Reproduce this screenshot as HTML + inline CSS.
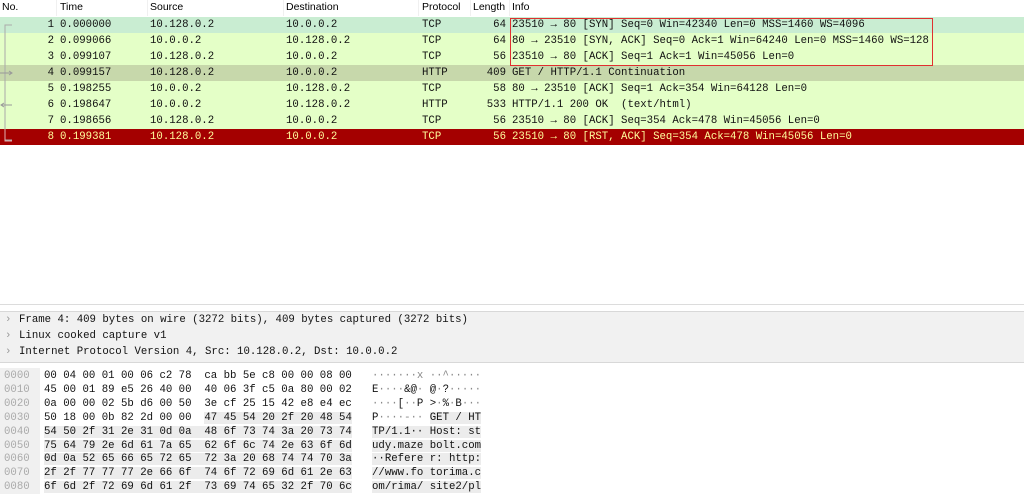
<!DOCTYPE html>
<html><head><meta charset="utf-8"><style>
*{margin:0;padding:0;box-sizing:border-box}
body{width:1024px;height:494px;overflow:hidden;background:#fff;position:relative;font-family:"Liberation Mono",monospace;font-size:10.7px;color:#111}
.hdr{position:absolute;left:0;top:0;width:1024px;height:16px;font-family:"Liberation Sans",sans-serif;font-size:10.5px;line-height:14px;color:#000}
.hdr span{position:absolute;top:0}
.hdr i{position:absolute;top:0;width:1px;height:16px;background:#f0f0f0}
.row{position:absolute;left:0;width:1024px;height:16px;line-height:16px;white-space:pre}
.row span{position:absolute;top:0}
.n{right:auto;width:54px;text-align:right;left:0}
.len{width:506px;text-align:right;left:0}
.det{position:absolute;left:0;top:311px;width:1024px;height:52px;background:#f1f1f1;border-top:1px solid #d8d8d8;border-bottom:1px solid #d8d8d8}
.det div{height:16px;line-height:16px;white-space:pre;padding-left:19px;position:relative}
.det div b{position:absolute;left:5px;color:#999;font-weight:normal}
.hex{position:absolute;left:0;top:368px;width:1024px;height:126px;background:#fff}
.off{position:absolute;left:0;top:0;width:40px;height:126px;background:#f0f0f0}
.hr{position:absolute;left:0;height:14px;line-height:14px;white-space:pre}
.g{background:#ececec}
</style></head><body>
<div class="hdr">
<span style="left:2px">No.</span><span style="left:60px">Time</span><span style="left:150px">Source</span><span style="left:286px">Destination</span><span style="left:422px">Protocol</span><span style="left:473px">Length</span><span style="left:512px">Info</span>
<i style="left:56px"></i><i style="left:147px"></i><i style="left:283px"></i><i style="left:418px"></i><i style="left:470px"></i><i style="left:509px"></i>
</div>

<div class="row" style="top:17px;background:#c9edd2"><span class="n">1</span><span style="left:60px">0.000000</span><span style="left:150px">10.128.0.2</span><span style="left:286px">10.0.0.2</span><span style="left:422px">TCP</span><span class="len">64</span><span style="left:512px">23510 → 80 [SYN] Seq=0 Win=42340 Len=0 MSS=1460 WS=4096</span></div>
<div class="row" style="top:33px;background:#e4ffc7"><span class="n">2</span><span style="left:60px">0.099066</span><span style="left:150px">10.0.0.2</span><span style="left:286px">10.128.0.2</span><span style="left:422px">TCP</span><span class="len">64</span><span style="left:512px">80 → 23510 [SYN, ACK] Seq=0 Ack=1 Win=64240 Len=0 MSS=1460 WS=128</span></div>
<div class="row" style="top:49px;background:#e4ffc7;height:16px"><span class="n">3</span><span style="left:60px">0.099107</span><span style="left:150px">10.128.0.2</span><span style="left:286px">10.0.0.2</span><span style="left:422px">TCP</span><span class="len">56</span><span style="left:512px">23510 → 80 [ACK] Seq=1 Ack=1 Win=45056 Len=0</span></div>
<div class="row" style="top:65px;background:#c7d8ab"><span class="n">4</span><span style="left:60px">0.099157</span><span style="left:150px">10.128.0.2</span><span style="left:286px">10.0.0.2</span><span style="left:422px">HTTP</span><span class="len">409</span><span style="left:512px">GET / HTTP/1.1 Continuation</span></div>
<div class="row" style="top:81px;background:#e4ffc7"><span class="n">5</span><span style="left:60px">0.198255</span><span style="left:150px">10.0.0.2</span><span style="left:286px">10.128.0.2</span><span style="left:422px">TCP</span><span class="len">58</span><span style="left:512px">80 → 23510 [ACK] Seq=1 Ack=354 Win=64128 Len=0</span></div>
<div class="row" style="top:97px;background:#e4ffc7"><span class="n">6</span><span style="left:60px">0.198647</span><span style="left:150px">10.0.0.2</span><span style="left:286px">10.128.0.2</span><span style="left:422px">HTTP</span><span class="len">533</span><span style="left:512px">HTTP/1.1 200 OK  (text/html)</span></div>
<div class="row" style="top:113px;background:#e4ffc7"><span class="n">7</span><span style="left:60px">0.198656</span><span style="left:150px">10.128.0.2</span><span style="left:286px">10.0.0.2</span><span style="left:422px">TCP</span><span class="len">56</span><span style="left:512px">23510 → 80 [ACK] Seq=354 Ack=478 Win=45056 Len=0</span></div>
<div class="row" style="top:129px;background:#a40000;color:#fffc9c"><span class="n">8</span><span style="left:60px">0.199381</span><span style="left:150px">10.128.0.2</span><span style="left:286px">10.0.0.2</span><span style="left:422px">TCP</span><span class="len">56</span><span style="left:512px">23510 → 80 [RST, ACK] Seq=354 Ack=478 Win=45056 Len=0</span></div>

<svg style="position:absolute;left:0;top:17px" width="20" height="130">
<path d="M12 8H5V123H12" fill="none" stroke="#aaa" stroke-width="1"/>
<path d="M0 56H12M9 54L12 56L9 58" fill="none" stroke="#999" stroke-width="1"/>
<path d="M12 88H1M4 86L1 88L4 90" fill="none" stroke="#999" stroke-width="1"/>
</svg>
<svg style="position:absolute;left:0;top:129px" width="14" height="16"><path d="M5 0V12H12" fill="none" stroke="#e0b0b0" stroke-width="1"/></svg>

<div style="position:absolute;left:510px;top:18px;width:423px;height:48px;border:1.5px solid #e03030"></div>

<div style="position:absolute;left:0;top:304px;width:1024px;height:1px;background:#dcdcdc"></div>
<div class="det">
<div><b>›</b>Frame 4: 409 bytes on wire (3272 bits), 409 bytes captured (3272 bits)</div>
<div><b>›</b>Linux cooked capture v1</div>
<div><b>›</b>Internet Protocol Version 4, Src: 10.128.0.2, Dst: 10.0.0.2</div>
</div>

<div class="hex">
<div class="off"></div>
<div class="hr" style="top:2px;left:4px;color:#aaa;line-height:13.9px">0000<br>0010<br>0020<br>0030<br>0040<br>0050<br>0060<br>0070<br>0080</div>
<div class="hr" style="top:2px;left:44px;line-height:13.9px">00 04 00 01 00 06 c2 78  ca bb 5e c8 00 00 08 00<br>45 00 01 89 e5 26 40 00  40 06 3f c5 0a 80 00 02<br>0a 00 00 02 5b d6 00 50  3e cf 25 15 42 e8 e4 ec<br>50 18 00 0b 82 2d 00 00  <span class="g">47 45 54 20 2f 20 48 54</span><br><span class="g">54 50 2f 31 2e 31 0d 0a  48 6f 73 74 3a 20 73 74</span><br><span class="g">75 64 79 2e 6d 61 7a 65  62 6f 6c 74 2e 63 6f 6d</span><br><span class="g">0d 0a 52 65 66 65 72 65  72 3a 20 68 74 74 70 3a</span><br><span class="g">2f 2f 77 77 77 2e 66 6f  74 6f 72 69 6d 61 2e 63</span><br><span class="g">6f 6d 2f 72 69 6d 61 2f  73 69 74 65 32 2f 70 6c</span></div>
<div class="hr" style="top:2px;left:372px;line-height:13.9px"><span style="color:#888">·······x ··^·····</span><br>E<span style="color:#888">····</span>&amp;@<span style="color:#888">·</span> @<span style="color:#888">·</span>?<span style="color:#888">·····</span><br><span style="color:#888">····</span>[<span style="color:#888">··</span>P &gt;<span style="color:#888">·</span>%<span style="color:#888">·</span>B<span style="color:#888">···</span><br>P<span style="color:#888">····-··</span> <span class="g">GET / HT</span><br><span class="g">TP/1.1·· Host: st</span><br><span class="g">udy.maze bolt.com</span><br><span class="g">··Refere r: http:</span><br><span class="g">//www.fo torima.c</span><br><span class="g">om/rima/ site2/pl</span></div>
</div>
</body></html>
